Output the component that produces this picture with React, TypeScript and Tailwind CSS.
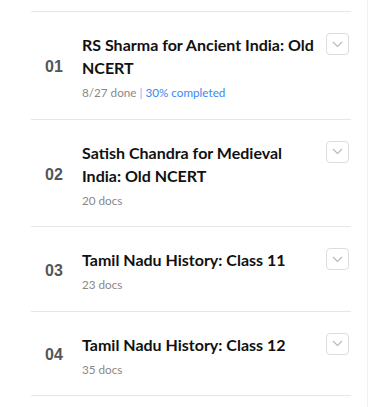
import React from "react";

type Item = { n: string; title: string; sub?: string; progress?: string };

const items: Item[] = [
  { n: "01", title: "RS Sharma for Ancient India: Old NCERT", sub: "8/27 done", progress: "30% completed" },
  { n: "02", title: "Satish Chandra for Medieval India: Old NCERT", sub: "20 docs" },
  { n: "03", title: "Tamil Nadu History: Class 11", sub: "23 docs" },
  { n: "04", title: "Tamil Nadu History: Class 12", sub: "35 docs" },
];

function Chevron() {
  return (
    <svg width="11" height="7" viewBox="0 0 11 7" fill="none">
      <path d="M1 1l4.5 4.5L10 1" stroke="#b8b8b8" strokeWidth="1.2" />
    </svg>
  );
}

export default function App() {
  return (
    <div className="w-[369px] h-[407px] bg-white overflow-hidden">
      <div className="w-[368px] h-full border-r border-[#f2f2f2] pt-[11px]">
        <div className="ml-[31px] w-[320px] border-t border-[#e6e6e6]">
          {items.map((it) => (
            <div key={it.n} className="flex items-center border-b border-[#e6e6e6] pt-[21px] pb-[17.6px]">
              <div
                className="w-[51px] pl-[14px] text-[16px] font-bold text-[#555555]"
                style={{ fontFamily: '"Liberation Sans", Arial, sans-serif' }}
              >
                {it.n}
              </div>
              <div className="flex-1 flex items-start" style={{ fontFamily: 'Lato, "Liberation Sans", sans-serif' }}>
                <div className="w-[240px]">
                  <div className="text-[16px] leading-[23px] font-bold text-[#111111]">{it.title}</div>
                  <div className="mt-[4px] text-[11.7px] leading-[18px] text-[#888888]">
                    {it.sub}
                    {it.progress && (
                      <>
                        {" "}
                        <span className="text-[#7fb0f5]">|</span>{" "}
                        <span className="text-[#3b86f2]">{it.progress}</span>
                      </>
                    )}
                  </div>
                </div>
                <div className="ml-auto mr-[2px] w-[23px] h-[22px] border border-[#dddddd] rounded-[4px] flex items-center justify-center">
                  <Chevron />
                </div>
              </div>
            </div>
          ))}
        </div>
      </div>
    </div>
  );
}
